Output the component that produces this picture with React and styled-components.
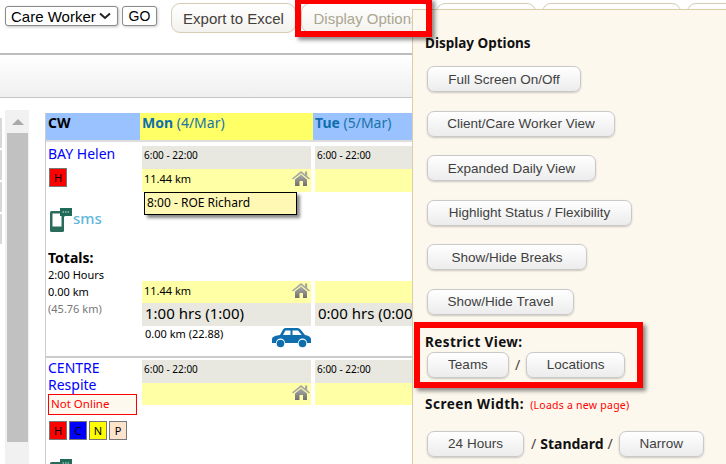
import React from "react";
import styled, { createGlobalStyle } from "styled-components";

const Global = createGlobalStyle`
  html, body { margin: 0; padding: 0; width: 726px; height: 464px; overflow: hidden; background: #fff; }
  #root { width: 726px; height: 464px; position: relative; overflow: hidden; }
  * { box-sizing: border-box; }
`;
const TAHOMA = `"Noto Sans", "DejaVu Sans", sans-serif`;
const ARIAL = `"Liberation Sans", Arial, sans-serif`;

const Page = styled.div`width: 726px; height: 464px; overflow: hidden; position: relative; font-family: ${TAHOMA}; color: #000;`;
const TopBar = styled.div`height: 53px; display: flex; align-items: flex-start; padding: 6px 0 0 5px; white-space: nowrap;`;
const NativeSelect = styled.div`
  width: 113px; height: 20px; flex: none; border: 1px solid #8a8a8a; border-radius: 3px; background: #fff;
  display: flex; align-items: center; justify-content: space-between; padding: 0 6px 0 5px;
  font: 15px ${ARIAL}; box-shadow: 1px 1px 3px rgba(0,0,0,.25);
`;
const NativeButton = styled.div`
  width: 35px; height: 20px; flex: none; margin-left: 4px; border: 1px solid #8a8a8a; border-radius: 3px; background: #fff;
  display: flex; align-items: center; justify-content: center; font: 14px ${ARIAL}; box-shadow: 1px 1px 3px rgba(0,0,0,.2);
`;
const TopButton = styled.div`
  width: ${p => p.$w}px; height: 30px; margin: -3px 0 0 ${p => p.$ml}px; flex: none;
  border: 1px solid #d2cdb4; border-radius: 9px; background: linear-gradient(#fff, #f3f2ee);
  display: flex; align-items: center; justify-content: center;
  font: 15px ${ARIAL}; color: ${p => p.$muted ? "#aaa690" : "#44403a"};
`;
const SubBar = styled.div`
  height: 45px; border-top: 2px solid #bdbdbd; border-bottom: 1px solid #c4c4c4;
  background: linear-gradient(#fff, #efefef);
`;
const Main = styled.div`display: flex; align-items: flex-start; padding-top: 12px;`;
const SideTabs = styled.div`width: 5px; flex: none; display: flex; flex-direction: column; gap: 2px; padding-top: 8px;`;
const SideTab = styled.div`width: 2px; height: 30px; background: #d8d8d8;`;
const Scroll = styled.div`
  width: 24px; height: 360px; background: #f1f1f1; margin-right: 16px; padding: 0 1px 0 2px; flex: none;
  display: flex; flex-direction: column; align-items: center;
`;
const ScrollArrow = styled.div`
  margin: 9px 0 6px; width: 0; height: 0; border-left: 6px solid transparent; border-right: 6px solid transparent;
  border-bottom: 6px solid #a9a9a9;
`;
const ScrollThumb = styled.div`width: 21px; height: 309px; background: #c1c1c1; margin-top: 2px;`;
const Table = styled.div`
  width: 441px; flex: none; display: grid; grid-template-columns: 94px 173px 173px;
  grid-template-rows: 29px 216px 200px; border-left: 1px solid #ccc; margin-top: 3px;
`;
const Head = styled.div`
  background: ${p => p.$today ? "#ffff66" : "#99c2ff"}; padding: 1px 2px; font-size: 14px; line-height: 18px;
  color: #1a73a8; border-bottom: 2px solid #ddd; white-space: nowrap;
  b { color: ${p => p.$black ? "#000" : "#0f6fae"}; }
`;
const CwCell = styled.div`padding: ${p => p.$pt}px 2px 0 2px; border-bottom: ${p => p.$line ? "2px solid #ccc" : "0"};`;
const Name = styled.div`font-size: 14px; line-height: 17px; color: #0000ff;`;
const Badges = styled.div`display: flex; gap: 2px; margin: ${p => p.$mt}px 0 0 1px;`;
const Badge = styled.div`
  width: 18px; height: 19px; border: 1px solid #777; background: ${p => p.$bg};
  display: flex; align-items: center; justify-content: center; font-size: 11px; line-height: 1; color: #000;
`;
const SmsRow = styled.div`
  display: flex; align-items: flex-start; margin: ${p => p.$mt}px 0 0 2px; color: #62b6dc; font-size: 15px; font-weight: 500; line-height: 18px;
  span { margin-top: 1px; }
`;
const Totals = styled.div`font-size: 14px; font-weight: 700; line-height: 17px; margin-top: 17px;`;
const Small = styled.div`font-size: 11px; line-height: 17px; color: ${p => p.$grey ? "#777" : "#000"}; white-space: nowrap;`;
const NotOnline = styled.div`
  width: 89px; height: 21px; border: 1px solid #f00; background: #fef9ee; color: #f00; font-size: 11.5px;
  line-height: 18px; padding-left: 2px; margin-top: 1px;
`;
const Day = styled.div`
  padding: ${p => p.$pt}px 2px 0; display: flex; flex-direction: column; justify-content: ${p => p.$split ? "space-between" : "flex-start"};
  border-bottom: ${p => p.$line ? "2px solid #ccc" : "0"};
`;
const Group = styled.div`display: flex; flex-direction: column; position: relative;`;
const Hours = styled.div`height: 23px; background: #e9e8e0; font-size: 10px; line-height: 18px; padding-left: 2px; white-space: nowrap;`;
const Km = styled.div`
  height: ${p => p.$h || 23}px; background: #ffffa6; font-size: 11px; line-height: 17px; padding: 1px 1px 0 2px;
  display: flex; justify-content: space-between; align-items: flex-start; white-space: nowrap;
`;
const Roster = styled.div`
  width: 153px; height: 23px; margin-left: 2px; border: 1px solid #000; background: #fff8b4;
  box-shadow: 3px 3px 3px #888; font-size: 12px; line-height: 19px; padding-left: 2px; white-space: nowrap;
`;
const Total = styled.div`height: 23px; background: #e9e8e0; font-size: 15px; line-height: 20px; padding-left: 3px; white-space: nowrap; overflow: hidden;`;
const Foot = styled.div`
  height: 30px; display: flex; justify-content: space-between; align-items: flex-start; padding: 1px 0 0 3px; font-size: 11px; line-height: 14px;
`;
const FootCar = styled.div`margin-top: 1px;`;

const Panel = styled.div`
  position: absolute; left: 412px; top: 9px; width: 314px; height: 470px;
  background: #fdf8ee; border: 1px solid #d9cda8; border-right: 0; padding: 25px 0 0 12px; font-family: ${TAHOMA};
`;
const Label = styled.div`
  font-size: 13.5px; font-weight: 700; line-height: 17px; margin-top: ${p => p.$mt || 0}px; white-space: nowrap; color: #111;
  letter-spacing: ${p => p.$ls || 0}px;
  small { font-size: 10.5px; font-weight: 400; color: #f00; margin-left: 2px; letter-spacing: .25px; }
`;
const OptionList = styled.div`display: flex; flex-direction: column; gap: 18.6px; margin: 14px 0 0 2px; align-items: flex-start;`;
const Opt = styled.div`
  width: ${p => p.$w}px; height: 26px; flex: none; border: 1px solid #c9c9c9; border-radius: 7px;
  background: linear-gradient(#fff, #ececec); box-shadow: 0 1px 2px rgba(0,0,0,.2);
  display: flex; align-items: center; justify-content: center; font: 13.5px ${ARIAL}; color: #3f3f3f; white-space: nowrap;
`;
const Inline = styled.div`
  display: flex; align-items: center; margin: ${p => p.$mt}px 0 0 2px; font-size: 14px; color: #444; white-space: nowrap;
  b { color: #111; }
`;
const Sep = styled.span`margin: 0 ${p => p.$r}px 0 ${p => p.$l}px;`;
const Highlight = styled.div`
  position: absolute; left: ${p => p.$x}px; top: ${p => p.$y}px; width: ${p => p.$w}px; height: ${p => p.$h}px;
  border: 6px solid #f00; box-shadow: 3px 3px 4px rgba(0,0,0,.45); pointer-events: none;
`;

const Home = () => (
  <svg width="18" height="16" viewBox="0 0 18 16">
    <defs><linearGradient id="hg" x1="0" y1="0" x2="0" y2="1"><stop offset="0" stopColor="#aaa" /><stop offset="1" stopColor="#6f6f6f" /></linearGradient></defs>
    <path d="M0 8.500 9 1l4 3.200V1.500h2.200v4.400L18 8.500l-1 1-8-6.300-8 6.300z" fill="#a6a6a6" />
    <path d="M3 9.500 9 4.600l6 4.900V16h-4v-5H7.500v5H3z" fill="url(#hg)" />
  </svg>
);
const Car = () => (
  <svg width="39" height="20" viewBox="0 0 39 20">
    <path fill="#0f6fae" d="M8 7 11 1.600C11.500.6 12.500 0 14 0h11c1.500 0 2.500.5 3.500 1.500L33 7c3 .3 5.500 1.500 6 4v4h-4a4.500 4.500 0 0 0-9 0H13a4.500 4.500 0 0 0-9 0H0v-4c.5-2.500 4-3.700 8-4z" />
    <path fill="#fff" d="M11 7l2.400-4.600h5.100V7zM20.500 2.400H26l3.800 4.600h-9.300z" />
    <circle cx="8.500" cy="15.500" r="3.800" fill="#0f6fae" /><circle cx="30.500" cy="15.500" r="3.800" fill="#0f6fae" />
  </svg>
);
const Phone = () => (
  <svg width="23" height="24" viewBox="0 0 23 24">
    <rect x="0" y="3" width="14" height="21" rx="1.500" fill="#2b6b5c" />
    <rect x="2.500" y="5.500" width="9" height="13" fill="#fff" />
    <path fill="#1f6a58" d="M10 0h12v8h-7l-3 3V8h-2z" />
    <path stroke="#cfe6dc" strokeWidth="1.200" strokeDasharray="1.500 1" d="M12.500 4h7.500" />
  </svg>
);
const Chevron = () => (
  <svg width="12" height="8" viewBox="0 0 12 8"><path d="M1 1.500l5 4.500 5-4.500" fill="none" stroke="#222" strokeWidth="2" /></svg>
);

export default function App() {
  return (
    <Page>
      <Global />
      <TopBar>
        <NativeSelect>Care Worker <Chevron /></NativeSelect>
        <NativeButton>GO</NativeButton>
        <TopButton $w={125} $ml={14}>Export to Excel</TopButton>
        <TopButton $w={130} $ml={5} $muted>Display Options</TopButton>
        <TopButton $w={100} $ml={5} />
        <TopButton $w={139} $ml={6} />
        <TopButton $w={80} $ml={6} />
      </TopBar>
      <SubBar />
      <Main>
        <SideTabs><SideTab /><SideTab /><SideTab /><SideTab /></SideTabs>
        <Scroll><ScrollArrow /><ScrollThumb /></Scroll>
        <Table>
          <Head $black><b>CW</b></Head>
          <Head $today><b>Mon</b> (4/Mar)</Head>
          <Head><b>Tue</b> (5/Mar)</Head>

          <CwCell $line $pt={3}>
            <Name>BAY Helen</Name>
            <Badges $mt={6}><Badge $bg="#f00">H</Badge></Badges>
            <SmsRow $mt={21}><Phone /><span>sms</span></SmsRow>
            <Totals>Totals:</Totals>
            <Small>2:00 Hours</Small>
            <Small>0.00 km</Small>
            <Small $grey>(45.76 km)</Small>
          </CwCell>
          <Day $split $line $pt={4}>
            <Group>
              <Hours>6:00 - 22:00</Hours>
              <Km>11.44 km<Home /></Km>
              <Roster>8:00 - ROE Richard</Roster>
            </Group>
            <Group>
              <Km $h={22}>11.44 km<Home /></Km>
              <Total>1:00 hrs (1:00)</Total>
              <Foot><span>0.00 km (22.88)</span><FootCar><Car /></FootCar></Foot>
            </Group>
          </Day>
          <Day $split $line $pt={4}>
            <Group>
              <Hours>6:00 - 22:00</Hours>
              <Km />
            </Group>
            <Group>
              <Km $h={22} />
              <Total>0:00 hrs (0:00)</Total>
              <Foot />
            </Group>
          </Day>

          <CwCell $pt={1}>
            <Name>CENTRE<br />Respite</Name>
            <NotOnline>Not Online</NotOnline>
            <Badges $mt={6}>
              <Badge $bg="#f00">H</Badge>
              <Badge $bg="#00f">C</Badge>
              <Badge $bg="#ff0">N</Badge>
              <Badge $bg="#fbe3cc">P</Badge>
            </Badges>
            <SmsRow $mt={19}><Phone /><span>sms</span></SmsRow>
          </CwCell>
          <Day $pt={2}>
            <Hours>6:00 - 22:00</Hours>
            <Km $h={22}>&nbsp;<Home /></Km>
          </Day>
          <Day $pt={2}>
            <Hours>6:00 - 22:00</Hours>
            <Km $h={22} />
          </Day>
        </Table>
      </Main>

      <Panel>
        <Label>Display Options</Label>
        <OptionList>
          <Opt $w={154}>Full Screen On/Off</Opt>
          <Opt $w={188}>Client/Care Worker View</Opt>
          <Opt $w={169}>Expanded Daily View</Opt>
          <Opt $w={205}>Highlight Status / Flexibility</Opt>
          <Opt $w={160}>Show/Hide Breaks</Opt>
          <Opt $w={147}>Show/Hide Travel</Opt>
        </OptionList>
        <Label $mt={19} $ls={0.4}>Restrict View:</Label>
        <Inline $mt={1}>
          <Opt $w={82}>Teams</Opt><Sep $l={6} $r={6}>/</Sep><Opt $w={99}>Locations</Opt>
        </Inline>
        <Label $mt={18} $ls={0.5}>Screen Width: <small>(Loads a new page)</small></Label>
        <Inline $mt={17}>
          <Opt $w={97}>24 Hours</Opt><Sep $l={7} $r={4}>/</Sep><b>Standard</b><Sep $l={4} $r={6}>/</Sep><Opt $w={85}>Narrow</Opt>
        </Inline>
      </Panel>

      <Highlight $x={295} $y={-2} $w={137} $h={39} />
      <Highlight $x={414} $y={322} $w={229} $h={66} />
    </Page>
  );
}
